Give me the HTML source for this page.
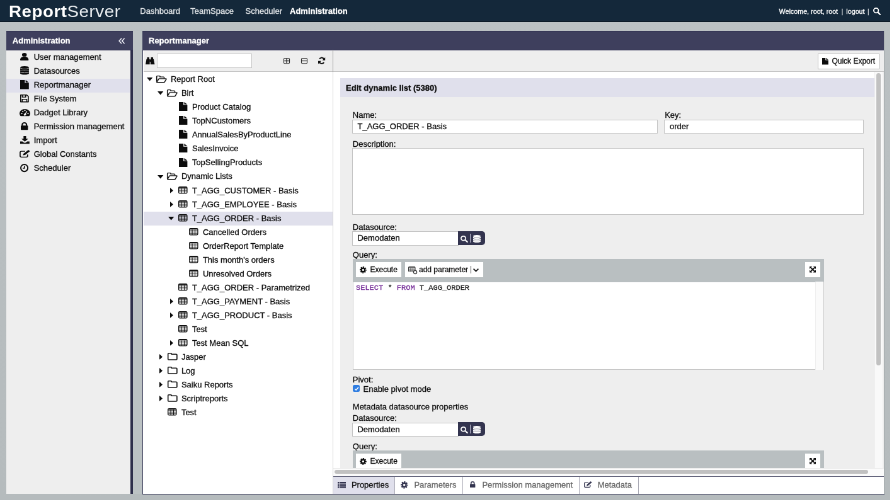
<!DOCTYPE html>
<html>
<head>
<meta charset="utf-8">
<title>ReportServer</title>
<style>
*{box-sizing:border-box;margin:0;padding:0}
html,body{width:890px;height:500px;overflow:hidden;background:#b7bdbf}
body{font-family:"Liberation Sans",sans-serif;font-size:13px;color:#0c0c0c;-webkit-text-stroke:.3px currentColor}
#app{will-change:transform;position:absolute;left:0;top:0;width:1413px;height:794px;transform:scale(.63);transform-origin:0 0;background:linear-gradient(#bdc3c5 0,#bac0c2 60px,#b5bbbd 100%);overflow:hidden}
svg{display:block;overflow:visible;position:absolute;fill:currentColor}
.a{position:absolute;white-space:nowrap}
.t{position:relative;top:1.2px}
#top{position:absolute;left:0;top:0;width:1413px;height:34.600px;background:#14283a;color:#fff;border-bottom:1.200px solid #07131e}
#logo{position:absolute;left:13.500px;top:3px;font-size:25.500px;line-height:30px;white-space:nowrap;letter-spacing:.5px;font-weight:bold;-webkit-text-stroke:0;transform:scaleX(1.087);transform-origin:0 0}
#logo span{font-weight:normal;color:#e9edf0}
.nav{position:absolute;top:1.2px;height:34px;line-height:34px;font-size:13px;color:#dfe3e6;white-space:nowrap}
.nav.on{font-weight:bold;color:#fff}
.tr{position:absolute;top:1.2px;height:34px;line-height:34px;font-size:10.750px;color:#fff;white-space:nowrap}
.phead{position:absolute;left:0;top:-.5px;background:#3e3f5d;color:#fff;font-weight:bold;font-size:13px;height:31px;line-height:29px;white-space:nowrap;border-top:1px solid #2f3050;border-bottom:1px solid #2f3050}
#lp{position:absolute;left:10px;top:49px;width:200.600px;height:735px;background:#eeeeee;border-right:4.600px solid #2e2f4b}
#lp .row{position:absolute;left:0;width:196px;height:22px;line-height:22px;white-space:nowrap}
#lp .row span{position:absolute;left:43.700px;top:1.2px}
#lp .row.sel::before{content:"";position:absolute;left:0;top:1.600px;width:196px;height:22px;background:#e0e0ec}
#gap{position:absolute;left:211px;top:49px;width:15px;height:735px;background:#bcc2c4}
#rp{position:absolute;left:227px;top:49px;width:1176px;height:735px;background:#eeeeee;border-left:1px solid #fff;box-shadow:1px 0 0 #a4aaac,-1px 0 0 #3d3e5c}
#tree{position:absolute;left:0;top:65px;width:301px;height:670px;background:#fff;border-right:1px solid #d4d4d4}
.tn{position:absolute;left:0;width:300px;height:22px;line-height:22px;white-space:nowrap}
.tn.sel::before{content:"";position:absolute;left:0;top:1.750px;width:300px;height:22px;background:#e0e0ec}
.tn span{position:absolute;top:1.2px}
.inp{position:absolute;background:#fff;border:1px solid #c4c4c4;font-size:13px;white-space:nowrap;overflow:hidden}
.lbl{position:absolute;font-size:13px;line-height:16px;white-space:nowrap}
.btn{position:absolute;background:#fff;font-size:12px;white-space:nowrap}
.dbtn{position:absolute;background:#33344f;border-radius:0 5px 5px 0;color:#fff}
.qb{position:absolute;background:#fff;border:1px solid #c8c8c8}
.qt{position:absolute;left:-1px;top:-1px;right:-1px;height:36.800px;background:#b9bfc1}
.tab{position:absolute;top:0;height:27px;line-height:25.500px;font-size:13px;color:#666;border-right:1px solid #a9a9b4;white-space:nowrap}
.tab span{position:absolute;top:0}
</style>
</head>
<body>
<div id="app">
<div id="top">
<div id="logo">Report<span>Server</span></div>
<div class="nav" style="left:222.3px">Dashboard</div>
<div class="nav" style="left:302.3px">TeamSpace</div>
<div class="nav" style="left:389.5px">Scheduler</div>
<div class="nav on" style="left:460px">Administration</div>
<div class="tr" id="wel" style="left:1236.500px">Welcome, root, root</div>
<div class="tr" style="left:1335.600px;color:#c8ccd0">|</div>
<div class="tr" id="lo" style="left:1343.300px">logout</div>
<div class="tr" style="left:1377px;color:#c8ccd0">|</div>
<svg style="left:1385.7px;top:11.8px;color:#fff" width="12" height="12" viewBox="1 1 14.8 14.8" preserveAspectRatio="none"><circle cx="6.700" cy="6.700" r="4.600" fill="none" stroke="currentColor" stroke-width="2.200"/><path d="M10.200 10.200l4.300 4.300" stroke="currentColor" stroke-width="2.700" stroke-linecap="round"/></svg>
</div>
<div id="lp">
<div class="phead" style="width:201px"><span class="a" style="left:9.800px;top:0.7px">Administration</span>
<svg style="left:177.500px;top:10px" width="11" height="10" viewBox="0 0 11 10"><path d="M5 .8L1.200 5 5 9.200M9.600.8L5.800 5l3.800 4.200" fill="none" stroke="#eeeef6" stroke-width="1.600"/></svg></div>
<div class="row" style="top:30px"><svg style="left:22.3px;top:5.2px" width="13.4" height="12" viewBox="1.6 1 12.8 15" preserveAspectRatio="none"><circle cx="8" cy="4.6" r="3.6"/><path d="M1.6 15.200c0-4.600 2.400-6.600 6.400-6.600s6.400 2 6.400 6.600c0 .5-.4.800-1 .800H2.600c-.6 0-1-.3-1-.8z"/></svg><span>User management</span></div>
<div class="row" style="top:52px"><svg style="left:22px;top:4.4px" width="14" height="13.6" viewBox="1.4 0.7 13.2 15.2" preserveAspectRatio="none"><ellipse cx="8" cy="3" rx="6.600" ry="2.300"/><path d="M1.400 3.70v2.83c0 1.300 2.900 2.300 6.600 2.300s6.600-1 6.600-2.300v-2.83c0 1.300-2.900 2.300-6.600 2.300s-6.600-1-6.600-2.300z"/><path d="M1.400 7.23v2.83c0 1.300 2.900 2.300 6.600 2.300s6.600-1 6.600-2.300v-2.83c0 1.300-2.900 2.300-6.600 2.300s-6.600-1-6.600-2.300z"/><path d="M1.400 10.76v2.83c0 1.300 2.900 2.300 6.600 2.300s6.600-1 6.600-2.300v-2.83c0 1.300-2.900 2.300-6.600 2.300s-6.600-1-6.600-2.300z"/></svg><span>Datasources</span></div>
<div class="row sel" style="top:74px"><svg style="left:22.1px;top:4px" width="13.8" height="14.4" viewBox="2.3 0.3 11.4 15.4" preserveAspectRatio="none"><path d="M2.300.3h6.100v5.200h5.300v10.200H2.300z"/><path d="M9.500.3l4.200 4.200H9.500z"/></svg><span>Reportmanager</span></div>
<div class="row" style="top:96px"><svg style="left:22.1px;top:5px" width="13.8" height="12.4" viewBox="1 1 14 14" preserveAspectRatio="none"><path d="M1.800 1.800h9.700l2.700 2.700v9.700H1.800z" fill="none" stroke="currentColor" stroke-width="1.600" stroke-linejoin="round"/><path d="M4.500 2v3.600h5.400V2M4.300 14v-4.400h7.400V14" fill="none" stroke="currentColor" stroke-width="1.500"/></svg><span>File System</span></div>
<div class="row" style="top:118px"><svg style="left:20.5px;top:5.6px" width="17" height="11.2" viewBox="0 1.8 16 12.2" preserveAspectRatio="none"><path d="M8 1.800a8 7.800 0 0 0-6.900 11.700c.2.300.4.500.8.500h12.200c.4 0 .6-.2.800-.5A8 7.800 0 0 0 8 1.800z"/><g fill="#eee"><circle cx="3.300" cy="9.600" r="1.100"/><circle cx="4.900" cy="5.800" r="1.100"/><circle cx="8" cy="4.300" r="1.100"/><circle cx="12.700" cy="9.600" r="1.100"/><path d="M10.500 5.200l1.200.6-2.300 4.500a1.800 1.800 0 1 1-1.200-.6z"/></g></svg><span>Dadget Library</span></div>
<div class="row" style="top:140px"><svg style="left:23.3px;top:5.1px" width="11.4" height="12.2" viewBox="2.4 0.6 11.2 14.6" preserveAspectRatio="none"><path d="M4.700 7.500V5a3.300 3.300 0 0 1 6.600 0v2.500" fill="none" stroke="currentColor" stroke-width="2.200"/><rect x="2.400" y="7" width="11.200" height="8.200" rx="1"/></svg><span>Permission management</span></div>
<div class="row" style="top:162px"><svg style="left:21.6px;top:5.1px" width="14.8" height="12.2" viewBox="0.8 0.8 14.4 14.6" preserveAspectRatio="none"><path d="M6 .8h4v5h3.400L8 11.200 2.600 5.800H6z"/><path d="M.8 11h3.400l1.800 1.800c1.100 1.100 2.900 1.100 4 0l1.800-1.800h3.400v4.400H.8z"/></svg><span>Import</span></div>
<div class="row" style="top:184px"><svg style="left:20.7px;top:5.2px" width="16.6" height="12" viewBox="1 1.6 14.5 13.7" preserveAspectRatio="none"><path d="M12.200 9.800v3a1.700 1.700 0 0 1-1.700 1.700h-7a1.700 1.700 0 0 1-1.700-1.700v-7a1.700 1.700 0 0 1 1.700-1.700h5.300" fill="none" stroke="currentColor" stroke-width="1.500"/><path d="M6.400 8.400l6.800-6.800 2.300 2.300-6.800 6.800-3 .7z"/></svg><span>Global Constants</span></div>
<div class="row" style="top:206px"><svg style="left:22.4px;top:4.6px" width="13.2" height="13.2" viewBox="0.7 0.7 14.6 14.6" preserveAspectRatio="none"><circle cx="8" cy="8" r="6.200" fill="none" stroke="currentColor" stroke-width="2.200"/><path d="M8.200 4.300v4.200H5.400" fill="none" stroke="currentColor" stroke-width="1.700"/></svg><span>Scheduler</span></div>
</div>
<div id="gap"></div>
<div id="rp">
<div class="phead" style="left:-1px;width:1176px"><span class="a" style="left:9px;top:0.7px">Reportmanager</span></div>
<div class="a" style="left:0;top:30.500px;width:1175px;height:1px;background:#fafafa"></div>
<svg style="left:2.85px;top:42.2px" width="14.5" height="11.2" viewBox="0.4 2 15.2 12.6" preserveAspectRatio="none"><path d="M.4 14.600L2 5.200h1V2h3.600v3.200h.8v9.400z"/><path d="M15.600 14.600L14 5.200h-1V2H9.400v3.200h-.8v9.400z"/><path d="M7 6h2v4H7z"/></svg>
<div class="inp" style="left:21px;top:36px;width:151px;height:23px"></div>
<svg style="left:221.6px;top:43.05px;color:#2c2c2c" width="10" height="9.3" viewBox="1.35 1.35 13.3 13.3" preserveAspectRatio="none"><rect x="2" y="2" width="12" height="12" rx="2.200" fill="none" stroke="currentColor" stroke-width="1.500"/><path d="M8 3v10M3 8h10" stroke="currentColor" stroke-width="1.800"/></svg>
<svg style="left:249.9px;top:43.05px;color:#2c2c2c" width="10" height="9.3" viewBox="1.35 1.35 13.3 13.3" preserveAspectRatio="none"><rect x="2" y="2" width="12" height="12" rx="2.200" fill="none" stroke="currentColor" stroke-width="1.500"/><path d="M2.600 8h10.800" stroke="currentColor" stroke-width="1.500"/></svg>
<svg style="left:277px;top:42.2px;color:#111" width="11.2" height="10.6" viewBox="1 1.6 14 12.8" preserveAspectRatio="none"><path d="M13.400 6.500A5.700 5.700 0 0 0 3.400 4.600" fill="none" stroke="currentColor" stroke-width="2.400"/><path d="M2.600 9.500a5.700 5.700 0 0 0 10 1.900" fill="none" stroke="currentColor" stroke-width="2.400"/><path d="M15 1.600v5.800H9.200z"/><path d="M1 14.400V8.600h5.800z"/></svg>
<div class="a" style="left:0;top:64px;width:1175px;height:1px;background:#c6c6c6"></div>
<div class="a" style="left:299.800px;top:30px;width:1.400px;height:35px;background:#9c9c9c"></div>
<div id="tree">
<div class="tn" style="top:0px"><svg style="left:5.4px;top:9.4px" width="9.4" height="5.4" viewBox="2.4 5 11.2 6.2" preserveAspectRatio="none"><path d="M2.400 5h11.200L8 11.200z"/></svg><svg style="left:20.3px;top:5.5px;color:#111" width="17.2" height="11.2" viewBox="0.7 1.8 17 12.2" preserveAspectRatio="none"><path d="M1.400 12.500V3.400c0-.5.400-.9.900-.9h3.400c.5 0 .9.400.9.900v.7h5.600c.5 0 .9.400.9.900v2" fill="none" stroke="currentColor" stroke-width="1.550"/><path d="M1.600 13.300l2.900-5.600c.2-.4.600-.6 1-.6h10.300c.6 0 .9.500.6 1l-2.600 4.800c-.2.400-.6.600-1 .6H2.300c-.6 0-.9 0-.7-.2z" fill="none" stroke="currentColor" stroke-width="1.550" stroke-linejoin="round"/></svg><span style="left:42.9px">Report Root</span></div>
<div class="tn" style="top:22.04px"><svg style="left:22.4px;top:9.4px" width="9.4" height="5.4" viewBox="2.4 5 11.2 6.2" preserveAspectRatio="none"><path d="M2.400 5h11.200L8 11.200z"/></svg><svg style="left:37.3px;top:5.5px;color:#111" width="17.2" height="11.2" viewBox="0.7 1.8 17 12.2" preserveAspectRatio="none"><path d="M1.400 12.500V3.400c0-.5.400-.9.900-.9h3.400c.5 0 .9.400.9.900v.7h5.600c.5 0 .9.400.9.900v2" fill="none" stroke="currentColor" stroke-width="1.550"/><path d="M1.600 13.300l2.900-5.600c.2-.4.600-.6 1-.6h10.300c.6 0 .9.500.6 1l-2.600 4.800c-.2.400-.6.600-1 .6H2.300c-.6 0-.9 0-.7-.2z" fill="none" stroke="currentColor" stroke-width="1.550" stroke-linejoin="round"/></svg><span style="left:59.9px">Birt</span></div>
<div class="tn" style="top:44.08px"><svg style="left:55.8px;top:4.3px" width="13.4" height="14" viewBox="2.3 0.3 11.4 15.4" preserveAspectRatio="none"><path d="M2.300.3h6.100v5.200h5.300v10.200H2.300z"/><path d="M9.500.3l4.200 4.200H9.500z"/></svg><span style="left:76.9px">Product Catalog</span></div>
<div class="tn" style="top:66.12px"><svg style="left:55.8px;top:4.3px" width="13.4" height="14" viewBox="2.3 0.3 11.4 15.4" preserveAspectRatio="none"><path d="M2.300.3h6.100v5.200h5.300v10.200H2.300z"/><path d="M9.500.3l4.200 4.200H9.500z"/></svg><span style="left:76.9px">TopNCustomers</span></div>
<div class="tn" style="top:88.16px"><svg style="left:55.8px;top:4.3px" width="13.4" height="14" viewBox="2.3 0.3 11.4 15.4" preserveAspectRatio="none"><path d="M2.300.3h6.100v5.200h5.300v10.200H2.300z"/><path d="M9.500.3l4.200 4.200H9.500z"/></svg><span style="left:76.9px">AnnualSalesByProductLine</span></div>
<div class="tn" style="top:110.2px"><svg style="left:55.8px;top:4.3px" width="13.4" height="14" viewBox="2.3 0.3 11.4 15.4" preserveAspectRatio="none"><path d="M2.300.3h6.100v5.200h5.300v10.200H2.300z"/><path d="M9.500.3l4.200 4.200H9.500z"/></svg><span style="left:76.9px">SalesInvoice</span></div>
<div class="tn" style="top:132.24px"><svg style="left:55.8px;top:4.3px" width="13.4" height="14" viewBox="2.3 0.3 11.4 15.4" preserveAspectRatio="none"><path d="M2.300.3h6.100v5.200h5.300v10.200H2.300z"/><path d="M9.500.3l4.200 4.200H9.500z"/></svg><span style="left:76.9px">TopSellingProducts</span></div>
<div class="tn" style="top:154.28px"><svg style="left:22.4px;top:9.4px" width="9.4" height="5.4" viewBox="2.4 5 11.2 6.2" preserveAspectRatio="none"><path d="M2.400 5h11.200L8 11.200z"/></svg><svg style="left:37.3px;top:5.5px;color:#111" width="17.2" height="11.2" viewBox="0.7 1.8 17 12.2" preserveAspectRatio="none"><path d="M1.400 12.500V3.400c0-.5.400-.9.900-.9h3.400c.5 0 .9.400.9.900v.7h5.600c.5 0 .9.400.9.900v2" fill="none" stroke="currentColor" stroke-width="1.550"/><path d="M1.600 13.300l2.900-5.600c.2-.4.600-.6 1-.6h10.300c.6 0 .9.500.6 1l-2.600 4.800c-.2.400-.6.600-1 .6H2.300c-.6 0-.9 0-.7-.2z" fill="none" stroke="currentColor" stroke-width="1.550" stroke-linejoin="round"/></svg><span style="left:59.9px">Dynamic Lists</span></div>
<div class="tn" style="top:176.32px"><svg style="left:41.8px;top:7.2px" width="5" height="8.8" viewBox="5 2.4 6.2 11.2" preserveAspectRatio="none"><path d="M5 2.400v11.200L11.200 8z"/></svg><svg style="left:55.2px;top:5.2px;color:#111" width="14.6" height="11.6" viewBox="0.45 0.95 17.1 14.1" preserveAspectRatio="none"><rect x="1.200" y="1.700" width="15.600" height="12.600" rx="2" fill="none" stroke="currentColor" stroke-width="1.500"/><path d="M1.200 5.500h15.600M1.200 8.500h15.600M1.200 11.500h15.600" stroke="currentColor" stroke-width=".9"/><path d="M6.400 4v10M11.600 4v10" stroke="currentColor" stroke-width="1.250"/><path d="M1.200 2.200h15.600v1.600H1.200z"/></svg><span style="left:76.9px">T_AGG_CUSTOMER - Basis</span></div>
<div class="tn" style="top:198.36px"><svg style="left:41.8px;top:7.2px" width="5" height="8.8" viewBox="5 2.4 6.2 11.2" preserveAspectRatio="none"><path d="M5 2.400v11.200L11.200 8z"/></svg><svg style="left:55.2px;top:5.2px;color:#111" width="14.6" height="11.6" viewBox="0.45 0.95 17.1 14.1" preserveAspectRatio="none"><rect x="1.200" y="1.700" width="15.600" height="12.600" rx="2" fill="none" stroke="currentColor" stroke-width="1.500"/><path d="M1.200 5.500h15.600M1.200 8.500h15.600M1.200 11.500h15.600" stroke="currentColor" stroke-width=".9"/><path d="M6.400 4v10M11.600 4v10" stroke="currentColor" stroke-width="1.250"/><path d="M1.200 2.200h15.600v1.600H1.200z"/></svg><span style="left:76.9px">T_AGG_EMPLOYEE - Basis</span></div>
<div class="tn sel" style="top:220.4px"><svg style="left:39.4px;top:9.4px" width="9.4" height="5.4" viewBox="2.4 5 11.2 6.2" preserveAspectRatio="none"><path d="M2.400 5h11.200L8 11.200z"/></svg><svg style="left:55.2px;top:5.2px;color:#111" width="14.6" height="11.6" viewBox="0.45 0.95 17.1 14.1" preserveAspectRatio="none"><rect x="1.200" y="1.700" width="15.600" height="12.600" rx="2" fill="none" stroke="currentColor" stroke-width="1.500"/><path d="M1.200 5.500h15.600M1.200 8.500h15.600M1.200 11.500h15.600" stroke="currentColor" stroke-width=".9"/><path d="M6.400 4v10M11.600 4v10" stroke="currentColor" stroke-width="1.250"/><path d="M1.200 2.200h15.600v1.600H1.200z"/></svg><span style="left:76.9px">T_AGG_ORDER - Basis</span></div>
<div class="tn" style="top:242.44px"><svg style="left:72.2px;top:5.2px;color:#111" width="14.6" height="11.6" viewBox="0.45 0.95 17.1 14.1" preserveAspectRatio="none"><rect x="1.200" y="1.700" width="15.600" height="12.600" rx="2" fill="none" stroke="currentColor" stroke-width="1.500"/><path d="M1.200 5.500h15.600M1.200 8.500h15.600M1.200 11.500h15.600" stroke="currentColor" stroke-width=".9"/><path d="M6.400 4v10M11.600 4v10" stroke="currentColor" stroke-width="1.250"/><path d="M1.200 2.200h15.600v1.600H1.200z"/></svg><span style="left:93.9px">Cancelled Orders</span></div>
<div class="tn" style="top:264.48px"><svg style="left:72.2px;top:5.2px;color:#111" width="14.6" height="11.6" viewBox="0.45 0.95 17.1 14.1" preserveAspectRatio="none"><rect x="1.200" y="1.700" width="15.600" height="12.600" rx="2" fill="none" stroke="currentColor" stroke-width="1.500"/><path d="M1.200 5.500h15.600M1.200 8.500h15.600M1.200 11.500h15.600" stroke="currentColor" stroke-width=".9"/><path d="M6.400 4v10M11.600 4v10" stroke="currentColor" stroke-width="1.250"/><path d="M1.200 2.200h15.600v1.600H1.200z"/></svg><span style="left:93.9px">OrderReport Template</span></div>
<div class="tn" style="top:286.52px"><svg style="left:72.2px;top:5.2px;color:#111" width="14.6" height="11.6" viewBox="0.45 0.95 17.1 14.1" preserveAspectRatio="none"><rect x="1.200" y="1.700" width="15.600" height="12.600" rx="2" fill="none" stroke="currentColor" stroke-width="1.500"/><path d="M1.200 5.500h15.600M1.200 8.500h15.600M1.200 11.500h15.600" stroke="currentColor" stroke-width=".9"/><path d="M6.400 4v10M11.600 4v10" stroke="currentColor" stroke-width="1.250"/><path d="M1.200 2.200h15.600v1.600H1.200z"/></svg><span style="left:93.9px">This month's orders</span></div>
<div class="tn" style="top:308.56px"><svg style="left:72.2px;top:5.2px;color:#111" width="14.6" height="11.6" viewBox="0.45 0.95 17.1 14.1" preserveAspectRatio="none"><rect x="1.200" y="1.700" width="15.600" height="12.600" rx="2" fill="none" stroke="currentColor" stroke-width="1.500"/><path d="M1.200 5.500h15.600M1.200 8.500h15.600M1.200 11.500h15.600" stroke="currentColor" stroke-width=".9"/><path d="M6.400 4v10M11.600 4v10" stroke="currentColor" stroke-width="1.250"/><path d="M1.200 2.200h15.600v1.600H1.200z"/></svg><span style="left:93.9px">Unresolved Orders</span></div>
<div class="tn" style="top:330.6px"><svg style="left:55.2px;top:5.2px;color:#111" width="14.6" height="11.6" viewBox="0.45 0.95 17.1 14.1" preserveAspectRatio="none"><rect x="1.200" y="1.700" width="15.600" height="12.600" rx="2" fill="none" stroke="currentColor" stroke-width="1.500"/><path d="M1.200 5.500h15.600M1.200 8.500h15.600M1.200 11.500h15.600" stroke="currentColor" stroke-width=".9"/><path d="M6.400 4v10M11.600 4v10" stroke="currentColor" stroke-width="1.250"/><path d="M1.200 2.200h15.600v1.600H1.200z"/></svg><span style="left:76.9px">T_AGG_ORDER - Parametrized</span></div>
<div class="tn" style="top:352.64px"><svg style="left:41.8px;top:7.2px" width="5" height="8.8" viewBox="5 2.4 6.2 11.2" preserveAspectRatio="none"><path d="M5 2.400v11.200L11.200 8z"/></svg><svg style="left:55.2px;top:5.2px;color:#111" width="14.6" height="11.6" viewBox="0.45 0.95 17.1 14.1" preserveAspectRatio="none"><rect x="1.200" y="1.700" width="15.600" height="12.600" rx="2" fill="none" stroke="currentColor" stroke-width="1.500"/><path d="M1.200 5.500h15.600M1.200 8.500h15.600M1.200 11.500h15.600" stroke="currentColor" stroke-width=".9"/><path d="M6.400 4v10M11.600 4v10" stroke="currentColor" stroke-width="1.250"/><path d="M1.200 2.200h15.600v1.600H1.200z"/></svg><span style="left:76.9px">T_AGG_PAYMENT - Basis</span></div>
<div class="tn" style="top:374.68px"><svg style="left:41.8px;top:7.2px" width="5" height="8.8" viewBox="5 2.4 6.2 11.2" preserveAspectRatio="none"><path d="M5 2.400v11.200L11.200 8z"/></svg><svg style="left:55.2px;top:5.2px;color:#111" width="14.6" height="11.6" viewBox="0.45 0.95 17.1 14.1" preserveAspectRatio="none"><rect x="1.200" y="1.700" width="15.600" height="12.600" rx="2" fill="none" stroke="currentColor" stroke-width="1.500"/><path d="M1.200 5.500h15.600M1.200 8.500h15.600M1.200 11.500h15.600" stroke="currentColor" stroke-width=".9"/><path d="M6.400 4v10M11.600 4v10" stroke="currentColor" stroke-width="1.250"/><path d="M1.200 2.200h15.600v1.600H1.200z"/></svg><span style="left:76.9px">T_AGG_PRODUCT - Basis</span></div>
<div class="tn" style="top:396.72px"><svg style="left:55.2px;top:5.2px;color:#111" width="14.6" height="11.6" viewBox="0.45 0.95 17.1 14.1" preserveAspectRatio="none"><rect x="1.200" y="1.700" width="15.600" height="12.600" rx="2" fill="none" stroke="currentColor" stroke-width="1.500"/><path d="M1.200 5.500h15.600M1.200 8.500h15.600M1.200 11.500h15.600" stroke="currentColor" stroke-width=".9"/><path d="M6.400 4v10M11.600 4v10" stroke="currentColor" stroke-width="1.250"/><path d="M1.200 2.200h15.600v1.600H1.200z"/></svg><span style="left:76.9px">Test</span></div>
<div class="tn" style="top:418.76px"><svg style="left:41.8px;top:7.2px" width="5" height="8.8" viewBox="5 2.4 6.2 11.2" preserveAspectRatio="none"><path d="M5 2.400v11.200L11.200 8z"/></svg><svg style="left:55.2px;top:5.2px;color:#111" width="14.6" height="11.6" viewBox="0.45 0.95 17.1 14.1" preserveAspectRatio="none"><rect x="1.200" y="1.700" width="15.600" height="12.600" rx="2" fill="none" stroke="currentColor" stroke-width="1.500"/><path d="M1.200 5.500h15.600M1.200 8.500h15.600M1.200 11.500h15.600" stroke="currentColor" stroke-width=".9"/><path d="M6.400 4v10M11.600 4v10" stroke="currentColor" stroke-width="1.250"/><path d="M1.200 2.200h15.600v1.600H1.200z"/></svg><span style="left:76.9px">Test Mean SQL</span></div>
<div class="tn" style="top:440.8px"><svg style="left:24.8px;top:7.2px" width="5" height="8.8" viewBox="5 2.4 6.2 11.2" preserveAspectRatio="none"><path d="M5 2.400v11.200L11.200 8z"/></svg><svg style="left:37.5px;top:4.9px;color:#111" width="15.6" height="11.6" viewBox="1 1.7 15.5 12.4" preserveAspectRatio="none"><path d="M1.700 12.300V3.500c0-.6.500-1.100 1.100-1.100h3.400c.6 0 1.100.5 1.100 1.100v.7h7.400c.6 0 1.100.5 1.100 1.100v7c0 .6-.5 1.100-1.100 1.100H2.800c-.6 0-1.100-.5-1.100-1.100z" fill="none" stroke="currentColor" stroke-width="1.600"/></svg><span style="left:59.9px">Jasper</span></div>
<div class="tn" style="top:462.84px"><svg style="left:24.8px;top:7.2px" width="5" height="8.8" viewBox="5 2.4 6.2 11.2" preserveAspectRatio="none"><path d="M5 2.400v11.200L11.200 8z"/></svg><svg style="left:37.5px;top:4.9px;color:#111" width="15.6" height="11.6" viewBox="1 1.7 15.5 12.4" preserveAspectRatio="none"><path d="M1.700 12.300V3.500c0-.6.500-1.100 1.100-1.100h3.400c.6 0 1.100.5 1.100 1.100v.7h7.400c.6 0 1.100.5 1.100 1.100v7c0 .6-.5 1.100-1.100 1.100H2.800c-.6 0-1.100-.5-1.100-1.100z" fill="none" stroke="currentColor" stroke-width="1.600"/></svg><span style="left:59.9px">Log</span></div>
<div class="tn" style="top:484.88px"><svg style="left:24.8px;top:7.2px" width="5" height="8.8" viewBox="5 2.4 6.2 11.2" preserveAspectRatio="none"><path d="M5 2.400v11.200L11.200 8z"/></svg><svg style="left:37.5px;top:4.9px;color:#111" width="15.6" height="11.6" viewBox="1 1.7 15.5 12.4" preserveAspectRatio="none"><path d="M1.700 12.300V3.500c0-.6.500-1.100 1.100-1.100h3.400c.6 0 1.100.5 1.100 1.100v.7h7.400c.6 0 1.100.5 1.100 1.100v7c0 .6-.5 1.100-1.100 1.100H2.800c-.6 0-1.100-.5-1.100-1.100z" fill="none" stroke="currentColor" stroke-width="1.600"/></svg><span style="left:59.9px">Saiku Reports</span></div>
<div class="tn" style="top:506.92px"><svg style="left:24.8px;top:7.2px" width="5" height="8.8" viewBox="5 2.4 6.2 11.2" preserveAspectRatio="none"><path d="M5 2.400v11.200L11.200 8z"/></svg><svg style="left:37.5px;top:4.9px;color:#111" width="15.6" height="11.6" viewBox="1 1.7 15.5 12.4" preserveAspectRatio="none"><path d="M1.700 12.300V3.500c0-.6.500-1.100 1.100-1.100h3.400c.6 0 1.100.5 1.100 1.100v.7h7.400c.6 0 1.100.5 1.100 1.100v7c0 .6-.5 1.100-1.100 1.100H2.800c-.6 0-1.100-.5-1.100-1.100z" fill="none" stroke="currentColor" stroke-width="1.600"/></svg><span style="left:59.9px">Scriptreports</span></div>
<div class="tn" style="top:528.96px"><svg style="left:38.2px;top:5.2px;color:#111" width="14.6" height="11.6" viewBox="0.45 0.95 17.1 14.1" preserveAspectRatio="none"><rect x="1.200" y="1.700" width="15.600" height="12.600" rx="2" fill="none" stroke="currentColor" stroke-width="1.500"/><path d="M1.200 5.500h15.600M1.200 8.500h15.600M1.200 11.500h15.600" stroke="currentColor" stroke-width=".9"/><path d="M6.400 4v10M11.600 4v10" stroke="currentColor" stroke-width="1.250"/><path d="M1.200 2.200h15.600v1.600H1.200z"/></svg><span style="left:59.9px">Test</span></div>
</div>
<div class="btn" id="qe" style="left:1070px;top:35.600px;width:98.400px;height:25.600px;border:1px solid #bdbdbd;line-height:23.600px"><svg style="left:6.1px;top:6.7px" width="9.8" height="10.4" viewBox="2.3 0.3 11.4 15.4" preserveAspectRatio="none"><path d="M2.300.3h6.100v5.200h5.300v10.200H2.300z"/><path d="M9.500.3l4.200 4.200H9.500z"/></svg><span class="a" style="left:21.400px;top:0.7px">Quick Export</span></div>
<div class="a" style="left:301px;top:65px;width:874px;height:670px;background:#fff"></div>
<div class="a" id="form" style="left:311.500px;top:75px;width:848.500px;height:620px;background:#eeeeee;overflow:hidden">
<div class="a" style="left:0;top:0;width:849px;height:29.500px;background:#e0e0ec;font-weight:bold;font-size:13px;line-height:29.500px"><span class="a" style="left:9.600px;top:0.7px">Edit dynamic list (5380)</span></div>
<div class="lbl" style="left:20.3px;top:51.4px">Name:</div>
<div class="inp" style="left:19.1px;top:65.7px;width:485.2px;height:22.5px;line-height:20.5px;padding-left:7.900px"><span style="position:relative;top:.2px">T_AGG_ORDER - Basis</span></div>
<div class="lbl" style="left:515.7px;top:51.4px">Key:</div>
<div class="inp" style="left:514.6px;top:65.7px;width:316.8px;height:22.5px;line-height:20.5px;padding-left:7.900px"><span style="position:relative;top:.2px">order</span></div>
<div class="lbl" style="left:20.3px;top:97px">Description:</div>
<div class="inp" style="left:19.1px;top:111px;width:812.3px;height:105.6px;line-height:103.6px;padding-left:7.900px"><span style="position:relative;top:.2px"></span></div>
<div class="lbl" style="left:20.3px;top:229.2px">Datasource:</div>
<div class="inp" style="left:19.1px;top:243.1px;width:169.1px;height:22.6px;line-height:20.6px;padding-left:7.900px"><span style="position:relative;top:.2px">Demodaten</span></div>
<div class="dbtn" style="left:187.8px;top:243px;width:42.500px;height:21.800px"><svg style="left:3.9px;top:7.1px;color:#fff" width="11.8" height="11" viewBox="1 1 14.8 14.8" preserveAspectRatio="none"><circle cx="6.700" cy="6.700" r="4.600" fill="none" stroke="currentColor" stroke-width="2.200"/><path d="M10.200 10.200l4.300 4.300" stroke="currentColor" stroke-width="2.700" stroke-linecap="round"/></svg><div class="a" style="left:19px;top:4px;width:1px;height:14px;background:#c4c4d8"></div><svg style="left:23.3px;top:5.5px;color:#fff" width="11.8" height="12" viewBox="1.4 0.7 13.2 15.2" preserveAspectRatio="none"><ellipse cx="8" cy="3" rx="6.600" ry="2.300"/><path d="M1.400 3.70v2.83c0 1.300 2.900 2.300 6.600 2.300s6.600-1 6.600-2.300v-2.83c0 1.300-2.900 2.300-6.600 2.300s-6.600-1-6.600-2.300z"/><path d="M1.400 7.23v2.83c0 1.300 2.900 2.300 6.600 2.300s6.600-1 6.600-2.300v-2.83c0 1.300-2.900 2.300-6.600 2.300s-6.600-1-6.600-2.300z"/><path d="M1.400 10.76v2.83c0 1.300 2.900 2.300 6.600 2.300s6.600-1 6.600-2.300v-2.83c0 1.300-2.900 2.300-6.600 2.300s-6.600-1-6.600-2.300z"/></svg></div>
<div class="lbl" style="left:20.3px;top:272.6px">Query:</div>
<div class="qb" style="left:20px;top:286.8px;width:748px;height:176.3px">
<div class="qt"></div>
<div class="btn" style="left:4.600px;top:4.500px;width:71.600px;height:23.300px;line-height:23.300px"><svg style="left:6.3px;top:6.6px" width="10.8" height="10.8" viewBox="0.6 0.6 14.8 14.8" preserveAspectRatio="none"><circle cx="8" cy="8" r="6.100" fill="none" stroke="currentColor" stroke-width="2.600" stroke-dasharray="3 1.790" stroke-dashoffset="1.500"/><circle cx="8" cy="8" r="3.800" fill="none" stroke="currentColor" stroke-width="3"/></svg><span class="a" style="left:22.400px;top:0.7px">Execute</span></div>
<div class="btn" style="left:82px;top:4.500px;width:124.300px;height:23.300px;line-height:23.300px"><svg style="left:5.75px;top:7.2px;color:#333" width="11.5" height="8.6" viewBox="0.45 0.95 17.1 14.1" preserveAspectRatio="none"><rect x="1.200" y="1.700" width="15.600" height="12.600" rx="2" fill="none" stroke="currentColor" stroke-width="1.500"/><path d="M1.200 5.500h15.600M1.200 8.500h15.600M1.200 11.500h15.600" stroke="currentColor" stroke-width=".9"/><path d="M6.400 4v10M11.600 4v10" stroke="currentColor" stroke-width="1.250"/><path d="M1.200 2.200h15.600v1.600H1.200z"/></svg><svg style="left:12px;top:12px" width="8" height="8" viewBox="0 0 8 8"><circle cx="4" cy="4" r="2.600" fill="#fff" stroke="#333" stroke-width="1.300"/></svg><span class="a" style="left:22.500px;top:0.7px">add parameter</span><div class="a" style="left:104px;top:6px;width:1px;height:12px;background:#333"></div><svg style="left:108.7px;top:10px" width="9" height="5.2" viewBox="1.75 4.35 12.5 7.1" preserveAspectRatio="none"><path d="M2.600 5.200L8 10.600l5.400-5.400" fill="none" stroke="currentColor" stroke-width="2.400"/></svg></div>
<div class="btn" style="left:717.300px;top:4.300px;width:23.800px;height:23.500px"><svg style="left:6.9px;top:7.2px" width="10" height="9.6" viewBox="1.2 1.2 13.6 13.6" preserveAspectRatio="none"><path d="M4 4l8 8M12 4l-8 8" stroke="currentColor" stroke-width="2.600"/><path d="M1.200 1.200h5.800L1.200 7zM14.800 1.200V7L9 1.200zM14.800 14.800H9l5.800-5.800zM1.200 14.800V9L7 14.800z"/></svg></div>
<div class="a" style="left:733.500px;top:35px;width:13px;height:140px;background:#fafafa;border-left:1px solid #eeeeee"></div>
<div class="a" style="left:4.500px;top:38.1px;font-family:'Liberation Mono',monospace;font-size:12px;line-height:14px;white-space:pre;color:#1c1c1c;transform:scaleY(.88);transform-origin:0 55%"><span style="color:#752c98">SELECT</span> * <span style="color:#752c98">FROM</span> T_AGG_ORDER</div>
</div>
<div class="lbl" style="left:20.3px;top:471.1px">Pivot:</div>
<div class="a" style="left:20.7px;top:487.3px;width:11px;height:11px;background:#2f7de1;border-radius:2.500px"><svg style="left:1.500px;top:1.500px" width="8" height="8" viewBox="0 0 8 8"><path d="M1.200 4.200l2 2L7 1.800" fill="none" stroke="#fff" stroke-width="1.600"/></svg></div>
<div class="lbl" style="left:37px;top:486.3px">Enable pivot mode</div>
<div class="lbl" style="left:20.3px;top:514.2px">Metadata datasource properties</div>
<div class="lbl" style="left:20.3px;top:532.2px">Datasource:</div>
<div class="inp" style="left:19.1px;top:546.5px;width:169.1px;height:22.6px;line-height:20.6px;padding-left:7.900px"><span style="position:relative;top:.2px">Demodaten</span></div>
<div class="dbtn" style="left:187.8px;top:546.4px;width:42.500px;height:21.800px"><svg style="left:3.9px;top:7.1px;color:#fff" width="11.8" height="11" viewBox="1 1 14.8 14.8" preserveAspectRatio="none"><circle cx="6.700" cy="6.700" r="4.600" fill="none" stroke="currentColor" stroke-width="2.200"/><path d="M10.200 10.200l4.300 4.300" stroke="currentColor" stroke-width="2.700" stroke-linecap="round"/></svg><div class="a" style="left:19px;top:4px;width:1px;height:14px;background:#c4c4d8"></div><svg style="left:23.3px;top:5.5px;color:#fff" width="11.8" height="12" viewBox="1.4 0.7 13.2 15.2" preserveAspectRatio="none"><ellipse cx="8" cy="3" rx="6.600" ry="2.300"/><path d="M1.400 3.70v2.83c0 1.300 2.900 2.300 6.600 2.300s6.600-1 6.600-2.300v-2.83c0 1.300-2.900 2.300-6.600 2.300s-6.600-1-6.600-2.300z"/><path d="M1.400 7.23v2.83c0 1.300 2.900 2.300 6.600 2.300s6.600-1 6.600-2.300v-2.83c0 1.300-2.900 2.300-6.600 2.300s-6.600-1-6.600-2.300z"/><path d="M1.400 10.76v2.83c0 1.300 2.900 2.300 6.600 2.300s6.600-1 6.600-2.300v-2.83c0 1.300-2.900 2.300-6.600 2.300s-6.600-1-6.600-2.300z"/></svg></div>
<div class="lbl" style="left:20.3px;top:577px">Query:</div>
<div class="qb" style="left:20px;top:590.8px;width:748px;height:80px">
<div class="qt"></div>
<div class="btn" style="left:4.600px;top:4.500px;width:71.600px;height:23.300px;line-height:23.300px"><svg style="left:6.3px;top:6.6px" width="10.8" height="10.8" viewBox="0.6 0.6 14.8 14.8" preserveAspectRatio="none"><circle cx="8" cy="8" r="6.100" fill="none" stroke="currentColor" stroke-width="2.600" stroke-dasharray="3 1.790" stroke-dashoffset="1.500"/><circle cx="8" cy="8" r="3.800" fill="none" stroke="currentColor" stroke-width="3"/></svg><span class="a" style="left:22.400px;top:0.7px">Execute</span></div>
<div class="btn" style="left:717.300px;top:4.300px;width:23.800px;height:23.500px"><svg style="left:6.9px;top:7.2px" width="10" height="9.6" viewBox="1.2 1.2 13.6 13.6" preserveAspectRatio="none"><path d="M4 4l8 8M12 4l-8 8" stroke="currentColor" stroke-width="2.600"/><path d="M1.200 1.200h5.800L1.200 7zM14.800 1.200V7L9 1.200zM14.800 14.800H9l5.800-5.800zM1.200 14.800V9L7 14.800z"/></svg></div>
</div>
</div>
<div class="a" style="left:1173px;top:65px;width:2px;height:630px;background:#ededed"></div>
<div class="a" style="left:1159.500px;top:65px;width:13.500px;height:630px;background:#f9f9f9;border-left:1px solid #efefef"></div>
<div class="a" style="left:1162.800px;top:66.500px;width:7.400px;height:464px;background:#c1c1c1;border-radius:3.500px"></div>
<div class="a" style="left:301px;top:693.600px;width:874px;height:14px;background:#fbfbfb;border-top:1px solid #ececec"></div>
<div class="a" style="left:302.500px;top:697.200px;width:847px;height:6.300px;background:#c1c1c1;border-radius:3.300px"></div>
<div class="a" id="tabs" style="left:300.500px;top:707px;width:874.500px;height:27px;background:#fff;border-top:1.300px solid #4c4d68">
<div class="tab" style="left:0;width:98.300px;background:#e0e0ec;color:#111"><svg style="left:7.3px;top:7.8px;color:#33344f" width="13" height="9.4" viewBox="0.6 2 14.8 12" preserveAspectRatio="none"><path d="M.6 2h3v3.200H.6zM.6 6.400h3v3.200H.6zM.6 10.800h3V14H.6zM4.800 2h10.600v3.200H4.800zM4.800 6.400h10.600v3.200H4.800zM4.800 10.800h10.600V14H4.800z"/></svg><span style="left:29.400px">Properties</span></div>
<div class="tab" style="left:98.300px;width:107.800px"><svg style="left:9.5px;top:6.8px;color:#33344f" width="11.4" height="11.4" viewBox="0.6 0.6 14.8 14.8" preserveAspectRatio="none"><circle cx="8" cy="8" r="6.100" fill="none" stroke="currentColor" stroke-width="2.600" stroke-dasharray="3 1.790" stroke-dashoffset="1.500"/><circle cx="8" cy="8" r="3.800" fill="none" stroke="currentColor" stroke-width="3"/></svg><span style="left:30.600px">Parameters</span></div>
<div class="tab" style="left:206.100px;width:185.600px"><svg style="left:11.2px;top:7px;color:#33344f" width="8.4" height="9.8" viewBox="2.4 0.6 11.2 14.6" preserveAspectRatio="none"><path d="M4.700 7.500V5a3.300 3.300 0 0 1 6.600 0v2.500" fill="none" stroke="currentColor" stroke-width="2.200"/><rect x="2.400" y="7" width="11.200" height="8.200" rx="1"/></svg><span style="left:30.800px">Permission management</span></div>
<div class="tab" style="left:391.700px;width:93.500px"><svg style="left:6.7px;top:7px;color:#33344f" width="12.6" height="10" viewBox="1 1.6 14.5 13.7" preserveAspectRatio="none"><path d="M12.200 9.800v3a1.700 1.700 0 0 1-1.700 1.700h-7a1.700 1.700 0 0 1-1.700-1.700v-7a1.700 1.700 0 0 1 1.700-1.700h5.300" fill="none" stroke="currentColor" stroke-width="1.500"/><path d="M6.400 8.400l6.800-6.800 2.300 2.300-6.800 6.800-3 .7z"/></svg><span style="left:28.500px">Metadata</span></div>
</div>
<div class="a" style="left:-2px;top:734.600px;width:1178px;height:1px;background:#4c4d68"></div>
</div>
</div>
</body>
</html>
